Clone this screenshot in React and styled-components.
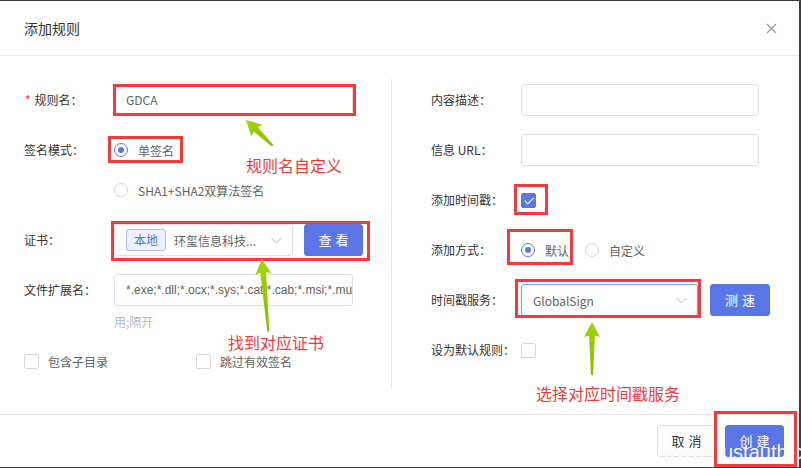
import React from "react";
import styled, { createGlobalStyle } from "styled-components";

const BLUE = "#5a76e6";
const RED = "#f43a3a";

const GlobalStyle = createGlobalStyle`
  html, body { margin: 0; padding: 0; background: #3c3c3c; }
  body { font-family: "Noto Sans CJK SC", "Noto Sans", sans-serif; }
  * { box-sizing: border-box; }
`;

const App = () => {
  return (
    <Page>
      <GlobalStyle />
      <Modal>
        <Header>
          <Title>添加规则</Title>
          <svg width="11" height="11" viewBox="0 0 11 11">
            <path d="M1 1 L10 10 M10 1 L1 10" stroke="#9a9a9a" strokeWidth="1.2" />
          </svg>
        </Header>
        <Body>
          <Column $width={391} $pl={24}>
            <FormItem>
              <Label><Required>*</Required>规则名：</Label>
              <TextBox $width={239}>GDCA</TextBox>
            </FormItem>
            <FormItem>
              <Label>签名模式：</Label>
              <RadioStack>
                <RadioOption>
                  <Radio $checked />
                  单签名
                </RadioOption>
                <RadioOption>
                  <Radio />
                  SHA1+SHA2双算法签名
                </RadioOption>
              </RadioStack>
            </FormItem>
            <FormItem>
              <Label>证书：</Label>
              <Select $width={179}>
                <Tag>本地</Tag>
                <SelectText>环玺信息科技...</SelectText>
                <Chevron />
              </Select>
              <Button $width={59} $ml={11}>查看</Button>
            </FormItem>
            <FormItem $mb={13}>
              <Label>文件扩展名：</Label>
              <ControlStack>
                <TextBox $width={239} $latin>*.exe;*.dll;*.ocx;*.sys;*.cat;*.cab;*.msi;*.mu</TextBox>
                <Hint>用;隔开</Hint>
              </ControlStack>
            </FormItem>
            <CheckRow>
              <CheckItem>
                <Checkbox />
                包含子目录
              </CheckItem>
              <CheckItem>
                <Checkbox />
                跳过有效签名
              </CheckItem>
            </CheckRow>
          </Column>
          <Column $width={408} $pl={39} $divider>
            <FormItem>
              <Label>内容描述：</Label>
              <TextBox $width={238} />
            </FormItem>
            <FormItem>
              <Label>信息 URL：</Label>
              <TextBox $width={238} />
            </FormItem>
            <FormItem>
              <Label>添加时间戳：</Label>
              <CheckItem>
                <Checkbox $checked />
              </CheckItem>
            </FormItem>
            <FormItem>
              <Label>添加方式：</Label>
              <RadioOption $mr={16}>
                <Radio $checked />
                默认
              </RadioOption>
              <RadioOption>
                <Radio />
                自定义
              </RadioOption>
            </FormItem>
            <FormItem>
              <Label>时间戳服务：</Label>
              <Select $width={177} $focus>
                <SelectText>GlobalSign</SelectText>
                <Chevron />
              </Select>
              <Button $width={60} $ml={12}>测速</Button>
            </FormItem>
            <FormItem>
              <Label>设为默认规则：</Label>
              <CheckItem>
                <Checkbox />
              </CheckItem>
            </FormItem>
          </Column>
        </Body>
        <Footer>
          <Button $width={59} $ghost>取消</Button>
          <Button $width={59}>创建</Button>
        </Footer>
      </Modal>

      <Watermark>www.trustauth.cn</Watermark>

      <RedBox $x={113} $y={84} $w={243} $h={32} />
      <RedBox $x={108} $y={136} $w={75} $h={27} />
      <RedBox $x={111} $y={221} $w={259} $h={40} />
      <RedBox $x={514} $y={184} $w={34} $h={31} />
      <RedBox $x={507} $y={229} $w={66} $h={36} />
      <RedBox $x={515} $y={279} $w={186} $h={39} />
      <RedBox $x={714} $y={411} $w={83} $h={56} />

      <Note $x={246} $y={154}>规则名自定义</Note>
      <Note $x={228} $y={331}>找到对应证书</Note>
      <Note $x={536} $y={382}>选择对应时间戳服务</Note>

      <ArrowLayer width="801" height="468" viewBox="0 0 801 468">
        <defs>
          <linearGradient id="arrowGreen" x1="0" y1="0" x2="0" y2="1">
            <stop offset="0" stopColor="#a6d400" />
            <stop offset="1" stopColor="#86bd00" />
          </linearGradient>
        </defs>
        <Arrow x={246} y={120} angle={-46} length={37} />
        <Arrow x={262} y={259} angle={-5} length={73} />
        <Arrow x={592} y={322} angle={0} length={53} />
      </ArrowLayer>
    </Page>
  );
};

const Arrow = ({ x, y, angle, length }) => (
  <g transform={`translate(${x} ${y}) rotate(${angle})`}>
    <polygon
      points={`0,0 8,15 3,13.5 1,${length} -1,${length} -3,13.5 -8,15`}
      fill="url(#arrowGreen)"
    />
  </g>
);

const Chevron = () => (
  <ChevronIcon width="11" height="7" viewBox="0 0 11 7">
    <path d="M0.5 0.8 L5.5 6 L10.5 0.8" fill="none" stroke="#bbbbbb" strokeWidth="1" />
  </ChevronIcon>
);

export default App;

const Page = styled.div`
  position: relative;
  width: 801px;
  height: 468px;
  overflow: hidden;
  background: #3c3c3c;
`;

const Modal = styled.div`
  margin-top: 1px;
  width: 799px;
  height: 466px;
  background: #fff;
  display: flex;
  flex-direction: column;
`;

const Header = styled.div`
  height: 55px;
  flex-shrink: 0;
  border-bottom: 1px solid #e8e8e8;
  display: flex;
  align-items: center;
  justify-content: space-between;
  padding: 0 22px 0 24px;
`;

const Title = styled.div`
  font-size: 14px;
  line-height: 20px;
  color: #333;
`;

const Body = styled.div`
  display: flex;
  height: 358px;
  flex-shrink: 0;
  padding: 23px 0 26px;
`;

const Column = styled.div`
  width: ${({ $width }) => $width}px;
  padding: 5px 0 0 ${({ $pl }) => $pl}px;
  display: flex;
  flex-direction: column;
  border-left: ${({ $divider }) => ($divider ? "1px solid #e8e8e8" : "none")};
`;

const FormItem = styled.div`
  display: flex;
  align-items: flex-start;
  margin-bottom: ${({ $mb }) => ($mb === undefined ? 18 : $mb)}px;
`;

const Label = styled.div`
  width: 90px;
  flex-shrink: 0;
  height: 32px;
  line-height: 32px;
  font-size: 12px;
  color: #333;
  white-space: nowrap;
`;

const Required = styled.span`
  color: ${RED};
  margin: 0 4px 0 1px;
`;

const TextBox = styled.div`
  width: ${({ $width }) => $width}px;
  height: 32px;
  border: 1px solid #dcdfe6;
  border-radius: 3px;
  padding: 0 11px;
  font-family: ${({ $latin }) =>
    $latin ? '"Liberation Sans", Arial, sans-serif' : '"Noto Sans CJK SC", "Noto Sans", sans-serif'};
  font-size: 12px;
  line-height: 30px;
  color: #606266;
  white-space: nowrap;
  overflow: hidden;
`;

const ControlStack = styled.div`
  display: flex;
  flex-direction: column;
`;

const Hint = styled.div`
  margin-top: 6px;
  font-size: 12px;
  line-height: 20px;
  color: #b8b8b8;
`;

const RadioStack = styled.div`
  display: flex;
  flex-direction: column;
  gap: 8px;
`;

const RadioOption = styled.div`
  height: 32px;
  display: flex;
  align-items: center;
  gap: 10px;
  font-size: 12px;
  color: #606266;
  margin-right: ${({ $mr }) => $mr || 0}px;
  white-space: nowrap;
`;

const Radio = styled.span`
  position: relative;
  width: 14px;
  height: 14px;
  border-radius: 50%;
  flex-shrink: 0;
  border: 1px solid ${({ $checked }) => ($checked ? BLUE : "#d4d7de")};
  background: #fff;
  &::after {
    content: "";
    display: ${({ $checked }) => ($checked ? "block" : "none")};
    position: absolute;
    left: 3px;
    top: 3px;
    width: 6px;
    height: 6px;
    border-radius: 50%;
    background: ${BLUE};
  }
`;

const Select = styled.div`
  width: ${({ $width }) => $width}px;
  height: 32px;
  border: 1px solid ${({ $focus }) => ($focus ? "#8396ef" : "#dcdfe6")};
  border-radius: 3px;
  padding: 0 10px 0 11px;
  display: flex;
  align-items: center;
`;

const Tag = styled.span`
  height: 22px;
  line-height: 20px;
  padding: 0 7px;
  border: 1px solid #b3c0f5;
  background: #edf1fd;
  border-radius: 2px;
  color: #5470e8;
  font-size: 12px;
  margin-right: 8px;
  flex-shrink: 0;
`;

const SelectText = styled.span`
  flex: 1;
  font-size: 12px;
  color: #606266;
  white-space: nowrap;
  overflow: hidden;
`;

const ChevronIcon = styled.svg`
  flex-shrink: 0;
`;

const Button = styled.div`
  width: ${({ $width }) => $width}px;
  height: 32px;
  margin-left: ${({ $ml }) => $ml || 0}px;
  border-radius: 3px;
  border: 1px solid ${({ $ghost }) => ($ghost ? "#dcdfe6" : BLUE)};
  background: ${({ $ghost }) => ($ghost ? "#fff" : BLUE)};
  color: ${({ $ghost }) => ($ghost ? "#333" : "#fff")};
  font-size: 13px;
  line-height: 30px;
  text-align: center;
  letter-spacing: 4px;
  text-indent: 4px;
  flex-shrink: 0;
`;

const CheckRow = styled.div`
  display: flex;
  height: 32px;
  align-items: center;
`;

const CheckItem = styled.div`
  width: 172px;
  height: 32px;
  display: flex;
  align-items: center;
  gap: 9px;
  font-size: 12px;
  color: #606266;
`;

const Checkbox = styled.span`
  width: 15px;
  height: 15px;
  flex-shrink: 0;
  border-radius: 2px;
  border: 1px solid ${({ $checked }) => ($checked ? BLUE : "#d4d7de")};
  background: ${({ $checked }) => ($checked ? BLUE : "#fff")};
  position: relative;
  &::after {
    content: "";
    display: ${({ $checked }) => ($checked ? "block" : "none")};
    position: absolute;
    left: 4.5px;
    top: 1.5px;
    width: 3.5px;
    height: 7.5px;
    border: solid #fff;
    border-width: 0 1.6px 1.6px 0;
    transform: rotate(45deg);
  }
`;

const Footer = styled.div`
  flex: 1;
  border-top: 1px solid #e8e8e8;
  display: flex;
  justify-content: flex-end;
  align-items: flex-start;
  gap: 9px;
  padding: 10px 15px 0;
`;

const RedBox = styled.div`
  position: absolute;
  left: ${({ $x }) => $x}px;
  top: ${({ $y }) => $y}px;
  width: ${({ $w }) => $w}px;
  height: ${({ $h }) => $h}px;
  border: 3px solid ${RED};
  pointer-events: none;
`;

const Note = styled.div`
  position: absolute;
  left: ${({ $x }) => $x}px;
  top: ${({ $y }) => $y}px;
  font-size: 16px;
  line-height: 22px;
  color: ${RED};
  white-space: nowrap;
`;

const ArrowLayer = styled.svg`
  position: absolute;
  left: 0;
  top: 0;
  pointer-events: none;
`;

const Watermark = styled.div`
  position: absolute;
  left: 662px;
  top: 440px;
  font-family: "Liberation Sans", Arial, sans-serif;
  font-size: 20px;
  line-height: 24px;
  color: rgba(255, 255, 255, 0.92);
  text-shadow: 0 0 1px rgba(170, 170, 170, 0.3);
  white-space: nowrap;
  pointer-events: none;
`;
